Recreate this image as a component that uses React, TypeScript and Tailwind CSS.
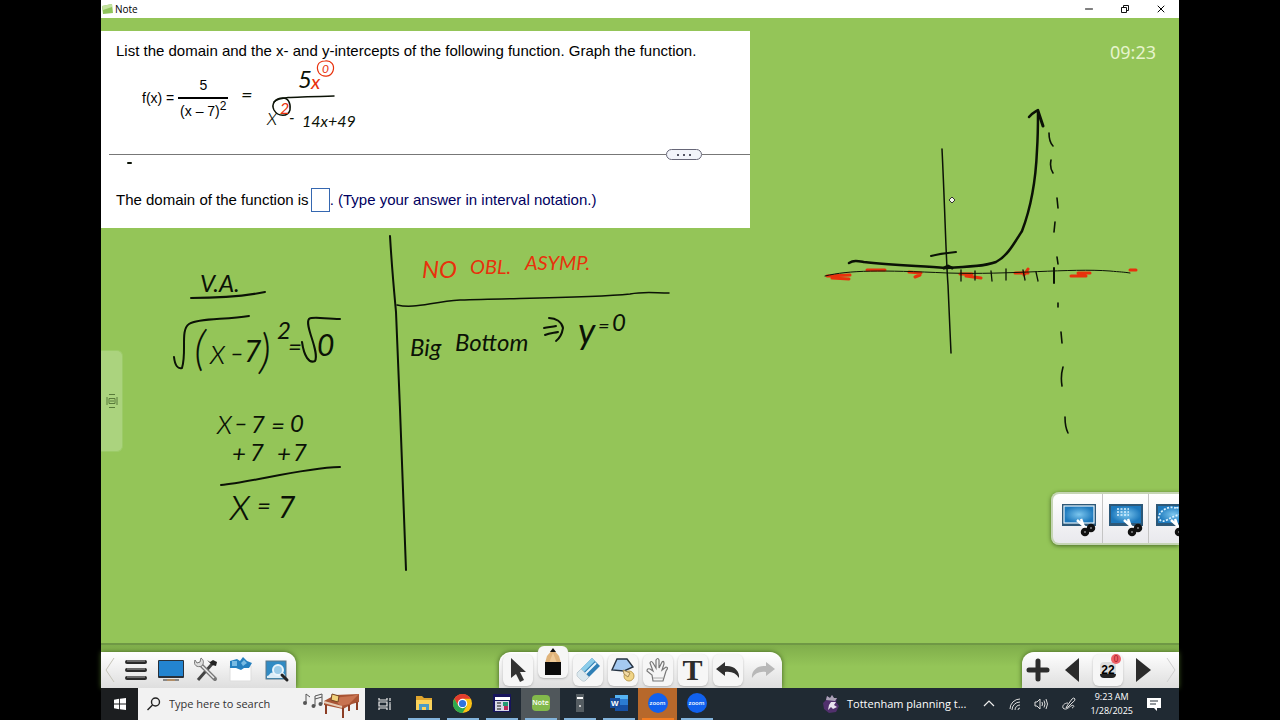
import React, { useState } from "react";
import { Minus, X } from "lucide-react";

const INK = "#0b1206";
const RED = "#e8310c";

// pen strokes on the board: path + width
const STROKES: { d: string; w: number; c?: string }[] = [
  // dividers
  { d: "M390 236C392 270 394 290 396 312C400 400 402 470 406 570", w: 2 },
  { d: "M397 305C415 309 430 302 460 300C520 298 590 298 630 294C645 291 655 293 669 293", w: 1.5 },
  { d: "M191 298C215 298 240 297 265 292", w: 2 },
  // radicals
  { d: "M174 357C175 366 178 369 182 368C187 352 180 330 189 324C198 318 225 320 249 316", w: 2 },
  { d: "M302 342C304 356 309 364 315 361C320 352 304 325 309 319C312 316 325 319 340 319", w: 2 },
  { d: "M221 485C250 483 300 468 340 467", w: 2 },
  // implies arrow
  { d: "M544 328C549 327 553 327 556 326M545 335C550 333 554 333 558 332M549 318C556 318 562 322 563 328C562 334 560 338 556 341", w: 2 },
  // fraction on the card
  { d: "M274 102C279 97 290 97 334 96", w: 1.5 },
  { d: "M283 98C275 98 271 104 274 110C278 117 288 117 290 110C291 103 288 98 283 98", w: 1.5 },
  { d: "M128 163H131", w: 2 },
  { d: "M325 61C317 61 316 68 319 73C323 78 331 77 333 71C335 65 331 60 325 61", w: 1.2, c: RED },
  // asymptote marks
  { d: "M827 276L850 275M832 278L849 279M867 270H885M909 272L921 273M915 277L920 275", w: 3, c: RED },
  { d: "M960 274L972 274M966 276L981 278M1015 273H1028M1024 275L1028 269M1071 276L1086 276M1078 273H1090M1130 270H1136", w: 3, c: RED },
  // axes
  { d: "M942 149C945 210 946 260 948 285C949 310 950 330 951 353", w: 1.5 },
  { d: "M825 276C850 270 880 270 948 273C1010 275 1070 268 1110 271C1120 272 1124 272 1130 273", w: 1 },
  { d: "M931 256C938 254 946 253 956 252", w: 2 },
  { d: "M961 270V281M975 271V280M991 271L992 281M1006 269V280M1023 270L1025 280M1036 272L1038 281", w: 1.3 },
  { d: "M1054 268V283", w: 2 },
  // curve
  { d: "M849 263C854 260 858 261 864 262C890 265 920 266 945 268C970 267 985 266 996 262C1006 257 1012 247 1022 231C1032 205 1036 175 1037 150C1038 135 1038 122 1038 112", w: 2.5 },
  { d: "M1029 117C1032 113 1035 112 1038 110", w: 2.5 },
  { d: "M1038 111L1043 126", w: 3 },
  { d: "M944 268L948 266L952 268", w: 3 },
  // vertical asymptote
  { d: "M1049 133C1049 139 1050 143 1053 146M1051 160C1050 165 1051 170 1053 173M1057 198L1058 208M1055 222L1054 232M1057 257L1058 264M1058 303V307M1061 332L1062 343M1063 367C1061 374 1061 380 1062 386M1065 417C1065 424 1066 429 1068 433", w: 1.6 },
];

// handwriting, one entry for each word
const NOTES: { t: string; x: number; y: number; s: string; c?: string }[] = [
  { t: "=", x: 241, y: 102, s: "text-xl" },
  { t: "5", x: 298, y: 88, s: "text-2xl" },
  { t: "x", x: 311, y: 89, s: "text-xl", c: RED },
  { t: "0", x: 322, y: 73, s: "text-xs", c: RED },
  { t: "x", x: 267, y: 125, s: "text-2xl font-light" },
  { t: "2", x: 280, y: 114, s: "text-base", c: RED },
  { t: "-", x: 289, y: 123, s: "text-base" },
  { t: "14x+49", x: 302, y: 127, s: "text-base" },
  { t: "V.A.", x: 200, y: 292, s: "text-2xl" },
  { t: "(", x: 194, y: 365, s: "text-5xl font-light" },
  { t: "x", x: 210, y: 364, s: "text-4xl font-light" },
  { t: "–", x: 230, y: 361, s: "text-2xl" },
  { t: "7", x: 244, y: 362, s: "text-3xl" },
  { t: ")", x: 259, y: 368, s: "text-5xl font-light" },
  { t: "2", x: 277, y: 339, s: "text-2xl" },
  { t: "=", x: 288, y: 355, s: "text-2xl" },
  { t: "0", x: 317, y: 356, s: "text-3xl" },
  { t: "x", x: 217, y: 434, s: "text-4xl font-light" },
  { t: "–", x: 234, y: 431, s: "text-2xl" },
  { t: "7", x: 251, y: 433, s: "text-2xl" },
  { t: "=", x: 271, y: 434, s: "text-2xl" },
  { t: "0", x: 290, y: 432, s: "text-2xl" },
  { t: "+", x: 232, y: 462, s: "text-2xl" },
  { t: "7", x: 250, y: 461, s: "text-2xl" },
  { t: "+", x: 277, y: 462, s: "text-2xl" },
  { t: "7", x: 293, y: 461, s: "text-2xl" },
  { t: "x", x: 230, y: 520, s: "text-5xl font-light" },
  { t: "=", x: 257, y: 514, s: "text-2xl" },
  { t: "7", x: 278, y: 518, s: "text-3xl" },
  { t: "NO", x: 422, y: 278, s: "text-2xl", c: RED },
  { t: "OBL.", x: 470, y: 274, s: "text-xl", c: RED },
  { t: "ASYMP.", x: 525, y: 270, s: "text-xl", c: RED },
  { t: "Big", x: 410, y: 356, s: "text-2xl" },
  { t: "Bottom", x: 455, y: 351, s: "text-2xl" },
  { t: "y", x: 578, y: 344, s: "text-4xl" },
  { t: "=", x: 598, y: 333, s: "text-xl" },
  { t: "0", x: 612, y: 331, s: "text-2xl" },
];

function InkLayer() {
  return (
    <svg
      className="pointer-events-none absolute inset-0 h-full w-full font-[Lato,sans-serif] italic"
      viewBox="101 18 1078 625"
      preserveAspectRatio="xMinYMin slice"
    >
      {STROKES.map((s, i) => (
        <path key={i} d={s.d} fill="none" stroke={s.c ?? INK} strokeWidth={s.w} strokeLinecap="round" strokeLinejoin="round" />
      ))}
      {NOTES.map((n, i) => (
        <text key={i} x={n.x} y={n.y} className={n.s} fill={n.c ?? INK}>
          {n.t}
        </text>
      ))}
      <path d="M952 197L955 200L952 203L949 200Z" fill="#f4f9ea" stroke="#333" />
    </svg>
  );
}

function TitleBar() {
  return (
    <header className="flex h-[18px] shrink-0 items-center bg-white font-['Open_Sans',sans-serif] text-black">
      <svg className="h-3 w-3" viewBox="0 0 12 12">
        <path d="M1 3L11 1L12 10L2 11Z" fill="#8fc45a" />
        <path d="M1 3L11 1L11 4L2 7Z" fill="#c4e2a0" />
      </svg>
      <span className="ml-0.5 flex-1 text-[10px]">Note</span>
      <button aria-label="Minimize" className="flex w-9 justify-center"><Minus className="h-3 w-3" strokeWidth={2} /></button>
      <button aria-label="Restore" className="flex w-9 justify-center">
        <svg className="h-3 w-3" viewBox="0 0 12 12" fill="none" stroke="#111">
          <path d="M2.5 4.500h5v5h-5zM4.500 4V2.500h5v5H8" />
        </svg>
      </button>
      <button aria-label="Close" className="flex w-9 justify-center"><X className="h-3 w-3" strokeWidth={2} /></button>
    </header>
  );
}

function ProblemCard() {
  const [answer, setAnswer] = useState("");
  return (
    <section className="mt-[13px] h-[197px] w-[649px] bg-white pl-[15px] font-['Liberation_Sans',Arial,sans-serif] text-[15px] leading-5 text-black">
      <p className="pt-[10px]">List the domain and the x- and y-intercepts of the following function. Graph the function.</p>
      <div className="mt-3 flex items-center pl-[26px] text-sm">
        <span>f(x) =</span>
        <span className="ml-1 flex flex-col items-center leading-6">
          <span className="w-[50px] border-b-2 border-black text-center">5</span>
          <span>(x – 7)<sup className="text-xs">2</sup></span>
        </span>
      </div>
      <div className="-ml-[7px] mt-[26px] flex items-center">
        <div className="h-px flex-1 bg-[#777]" />
        <button aria-label="More" className="flex h-[11px] w-9 items-center justify-center gap-1 rounded-full border border-[#667] bg-[#f2f4fa]">
          <i className="h-0.5 w-0.5 rounded-full bg-[#223]" />
          <i className="h-0.5 w-0.5 rounded-full bg-[#223]" />
          <i className="h-0.5 w-0.5 rounded-full bg-[#223]" />
        </button>
        <div className="h-px w-12 bg-[#777]" />
      </div>
      <div className="mt-7 flex items-center">
        <label htmlFor="domain">The domain of the function is</label>
        <input id="domain" value={answer} onChange={(e) => setAnswer(e.target.value)} className="ml-0.5 h-6 w-[19px] border border-[#3567b0] bg-white text-center outline-none" />
        <span className="text-[#000060]">. (Type your answer in interval notation.)</span>
      </div>
    </section>
  );
}

function CaptureIcon({ kind }: { kind: "screen" | "area" | "free" }) {
  return (
    <svg className="h-9 w-9" viewBox="0 0 36 36">
      <defs>
        <radialGradient id={`cap-${kind}`}>
          <stop offset="0" stopColor="#7cc6ee" />
          <stop offset="1" stopColor="#1d79bd" />
        </radialGradient>
      </defs>
      <rect x="1" y="3" width="34" height="22" fill="#2d5878" />
      <rect x="3" y="5" width="30" height="17" fill={`url(#cap-${kind})`} stroke={kind === "screen" ? "#e5f4fc" : "none"} strokeWidth="1.2" />
      {kind === "area" && <path d="M9 8H21M9 11H21M9 14H21" stroke="#d9f1ff" strokeWidth="1.5" strokeDasharray="2 1.500" />}
      {kind === "free" && <path d="M21 7C12 4 2 12 4 18C9 24 15 15 24 14C29 10 27 5 21 7" fill="none" stroke="#d9f1ff" strokeWidth="1.8" strokeDasharray="2 1.500" />}
      <path d="M16 19L25 27M20 18L24 29" stroke="#fff" strokeWidth="2.500" />
      <circle cx="24" cy="31" r="2.500" fill="none" stroke="#111" strokeWidth="3.500" />
      <circle cx="30" cy="27" r="2.500" fill="none" stroke="#111" strokeWidth="3.500" />
    </svg>
  );
}

function Board() {
  return (
    <main className="relative flex min-h-0 flex-1 items-start justify-between overflow-hidden">
      <ProblemCard />
      <time className="mr-[23px] mt-5 font-['Noto_Sans',sans-serif] text-lg leading-7 text-[#e6f4cc]">09:23</time>
      <InkLayer />
      <button aria-label="Open side panel" className="absolute left-0 top-[332px] flex h-[102px] w-[22px] items-center justify-center rounded-r-md border border-l-0 border-[#9ccb68] bg-[#abd37e]">
        <svg className="h-4 w-3" viewBox="0 0 12 16" fill="none" stroke="#587a3a">
          <path d="M3 1.500H9M3 14.500H9M3 5.500H9V10.500H3ZM4 8H8M1 4V12M11 4V12" />
        </svg>
      </button>
      <div className="absolute right-0 top-[474px] flex h-[53px] w-32 items-center overflow-hidden rounded-l-lg border-2 border-r-0 border-[#c5d5b5] bg-linear-to-b from-white to-[#e9e9ed] pl-0.5 shadow-[0_1px_4px_#4a6a28]">
        <button aria-label="Capture screen" className="flex h-full w-[47px] shrink-0 items-center justify-center"><CaptureIcon kind="screen" /></button>
        <button aria-label="Capture area" className="flex h-full w-[47px] shrink-0 items-center justify-center border-x border-[#c4c4c4]"><CaptureIcon kind="area" /></button>
        <button aria-label="Capture freehand" className="flex h-full w-[47px] shrink-0 items-center justify-center"><CaptureIcon kind="free" /></button>
      </div>
    </main>
  );
}

function Tool({ label, raised, plain, children }: { label: string; raised?: boolean; plain?: boolean; children: React.ReactNode }) {
  return (
    <button
      aria-label={label}
      className={`flex h-8 w-[30px] shrink-0 items-center justify-center rounded-md ${plain ? "" : "bg-[#f6f6f6] shadow-[0_1px_2px_#b5b5b5]"} ${raised ? "-mt-4" : ""}`}
    >
      <svg className="h-7 w-7" viewBox="0 0 28 28">{children}</svg>
    </button>
  );
}

function BoardToolbar() {
  const panel = "flex h-9 items-center gap-[5px] bg-linear-to-b from-white to-[#dedede] shadow-[0_0_5px_#3f5c20]";
  return (
    <nav className="grid h-[45px] shrink-0 grid-cols-[1fr_auto_1fr] items-end border-t-2 border-[#6f9845] bg-linear-to-b from-[#80ae4b] to-[#94c558] to-50%">
      <div className={`${panel} justify-self-start rounded-tr-xl pr-[5px]`}>
        <svg className="h-8 w-[15px]" viewBox="0 0 15 32" fill="none" stroke="#c5c4b8"><path d="M13 4L5 16L13 28" /></svg>
        <Tool label="Menu" plain>
          <path d="M5 6H23M5 14H23M5 22H23" stroke="#2a2a2a" strokeWidth="4" strokeLinecap="round" />
          <path d="M5 5H23M5 13H23M5 21H23" stroke="#aaa" />
        </Tool>
        <Tool label="Desktop" plain>
          <rect x="1" y="4" width="26" height="18" rx="1" fill="#293039" />
          <rect x="2" y="5" width="24" height="15" fill="#2384d0" />
          <path d="M6 24H22" stroke="#888" strokeWidth="2" />
          <path d="M10 24H18" stroke="#d99145" />
        </Tool>
        <Tool label="Tools" plain>
          <path d="M6 24L20 8" stroke="#444" strokeWidth="3" />
          <path d="M15 4L20 9L24 10L25 6L21 4L18 6Z" fill="#222" />
          <path d="M8 8L23 23" stroke="#777" strokeWidth="4" strokeLinecap="round" />
          <path d="M8 8L22 22" stroke="#eee" strokeWidth="1.500" />
          <path d="M9 2L8 6L5 7L3 4C1 9 5 12 10 10C12 7 12 4 9 2" fill="#ddd" stroke="#777" />
        </Tool>
        <Tool label="Gallery" plain>
          <path d="M3 10V25H24V10Z" fill="#fff" stroke="#ddd" />
          <path d="M3 5L10 3L13 5L16 1L20 5L25 7L22 12H17L14 14L9 12H3Z" fill="#2680bf" />
          <path d="M5 5H10V10H5ZM17 4L20 7L16 10L14 7Z" fill="#79bbe3" />
        </Tool>
        <Tool label="Image search" plain>
          <rect x="4" y="5" width="20" height="18" fill="#318bc4" stroke="#5b7889" />
          <path d="M5 20C8 20 8 15 12 17C14 13 20 14 23 19V22H5Z" fill="#dcedf7" />
          <circle cx="16" cy="14" r="5" fill="#9ccce9" stroke="#eaf5fc" strokeWidth="2" />
          <path d="M20 19L25 24" stroke="#222" strokeWidth="3" strokeLinecap="round" />
        </Tool>
      </div>
      <div className={`${panel} rounded-t-xl px-1`}>
        <Tool label="Select">
          <path d="M7 2V22L12 18L16 26L20 24L16 16H22Z" fill="#333" />
        </Tool>
        <Tool label="Pen" raised>
          <path d="M14 1L20 8L22 15H6L8 8Z" fill="#e0b37a" />
          <path d="M14 5L18 15H10Z" fill="#efca97" />
          <path d="M14 0L17 4L11 4Z" fill="#111" />
          <path d="M6 14H22V27H6Z" fill="#0b0b0b" />
        </Tool>
        <Tool label="Eraser">
          <path d="M3 17L18 2L26 10L11 25Z" fill="#2f7fb5" />
          <path d="M7 13L18 2L21 5L10 16Z" fill="#8ccdea" />
          <path d="M11 18L22 7" stroke="#e8f6fd" strokeWidth="2" />
          <path d="M3 17L7 13L15 21L11 25Q9 26 7 24L3 20Z" fill="#dbe8ee" stroke="#b9c5cb" strokeWidth=".7" />
        </Tool>
        <Tool label="Shapes">
          <path d="M8 3H18L24 11L15 15L3 14Z" fill="#a5caf1" stroke="#263342" strokeWidth="1.400" />
          <circle cx="20" cy="20" r="5" fill="#f0d486" stroke="#bf9e50" />
          <path d="M14 14L21 17L19 21L15 18Z" fill="#f4dca5" stroke="#a58b55" />
        </Tool>
        <Tool label="Pan">
          <path d="M9 25L8 19L3 15Q3 12 6 13L9 15L6 7Q7 4 9 7L12 12V4Q14 1 15 4V12L18 6Q20 4 20 8L18 14L22 11Q25 11 22 15L19 25Z" fill="#f5f5f5" stroke="#777" strokeWidth="1.200" />
          <path d="M9 22H19" stroke="#aaa" />
        </Tool>
        <button aria-label="Text" className="flex h-8 w-[30px] items-center justify-center rounded-md bg-[#f6f6f6] font-['Liberation_Serif',serif] text-3xl font-bold text-[#2c2c2c] shadow-[0_1px_2px_#b5b5b5]">T</button>
        <Tool label="Undo">
          <path d="M2 13L11 6V10C20 9 26 15 25 22C22 17 17 15 11 16V20Z" fill="#303030" />
        </Tool>
        <Tool label="Redo" plain>
          <path d="M26 13L17 6V10C8 9 2 15 3 22C6 17 11 15 17 16V20Z" fill="#b8b8b8" />
        </Tool>
      </div>
      <div className={`${panel} justify-self-end rounded-tl-xl pl-px`}>
        <Tool label="Add page" plain>
          <path d="M14 5V23M5 14H23" stroke="#2c2c2c" strokeWidth="5" strokeLinecap="round" />
        </Tool>
        <Tool label="Previous page" plain><path d="M6 14L20 2V26Z" fill="#2b2b2b" /></Tool>
        <button aria-label="Page 22" className="relative flex h-8 w-[30px] items-center justify-center rounded-md bg-[#f6f6f6] shadow-[0_1px_2px_#b5b5b5]">
          <span className="flex h-4 w-4 items-center justify-center rounded-sm border-b-4 border-[#222] bg-[#ddd] pt-1 font-['Liberation_Sans',sans-serif] text-xs font-bold text-black">22</span>
          <span className="absolute top-0 right-0.5 flex h-[10px] w-[10px] items-center justify-center rounded-full bg-[#ed6169] text-[8px] text-[#a31822]">0</span>
        </button>
        <Tool label="Next page" plain><path d="M7 2L22 14L7 26Z" fill="#2b2b2b" /></Tool>
        <svg className="h-8 w-4" viewBox="0 0 16 32" fill="none" stroke="#d0d0d0"><path d="M4 4L12 16L4 28" /></svg>
      </div>
    </nav>
  );
}

function TaskApp({ label, box = "", bar = "bg-[#83b4dc]", children }: { label: string; box?: string; bar?: string; children: React.ReactNode }) {
  return (
    <button aria-label={label} className={`flex h-full w-[39px] shrink-0 flex-col items-center ${box}`}>
      <span className="flex flex-1 items-center">{children}</span>
      <span className={`h-0.5 w-8 ${bar}`} />
    </button>
  );
}

function ZoomBadge() {
  return <span className="flex h-5 w-5 items-center justify-center rounded-full bg-[#1161ee] text-[6px] font-semibold text-white">zoom</span>;
}

function Taskbar() {
  return (
    <footer className="flex h-8 shrink-0 items-center bg-[#202a33] font-['Open_Sans',sans-serif] text-white">
      <button aria-label="Start" className="flex h-full w-[37px] items-center justify-center bg-[#1c1e20]">
        <svg className="h-3 w-3" viewBox="0 0 14 14" fill="#fff"><path d="M0 2L6 1V6.500H0ZM7 1L14 0V6.500H7ZM0 7.500H6V13L0 12ZM7 7.500H14V14L7 13Z" /></svg>
      </button>
      <div className="flex h-full w-[227px] items-center bg-[#f2f2f2] pl-2">
        <svg className="h-4 w-4 shrink-0" viewBox="0 0 16 16" fill="none" stroke="#222" strokeWidth="1.400"><circle cx="9.500" cy="6" r="4" /><path d="M6.500 9L1.500 14" /></svg>
        <input aria-label="Search" placeholder="Type here to search" className="ml-[7px] min-w-0 flex-1 bg-transparent text-[11px] text-black outline-none placeholder:text-[#333]" />
        <svg className="mr-1 h-7 w-[60px] shrink-0" viewBox="0 0 60 28">
          <path d="M5 13V4L9 7M14 16V6L21 4V14M14 9L21 7" fill="none" stroke="#555" />
          <g fill="#555"><circle cx="4" cy="13" r="2" /><circle cx="12.500" cy="16" r="2" /><circle cx="19.500" cy="14" r="2" /></g>
          <path d="M23 11L34 5L58 4V12L51 14L42 19L23 15Z" fill="#a95434" />
          <path d="M31 8L51 6L58 4L48 14L40 16Z" fill="#c87350" />
          <path d="M23 12L41 17" stroke="#e6ccb6" strokeWidth="2" />
          <path d="M25 15V24M42 18V28M56 12V20M48 15V21" stroke="#8c3d24" strokeWidth="2" />
          <path d="M31 4L38 6L37 12L30 10Z" fill="#f2d17b" stroke="#744322" />
        </svg>
      </div>
      <button aria-label="Task view" className="flex h-full w-[39px] items-center justify-center">
        <svg className="h-3.5 w-3.5" viewBox="0 0 14 14" fill="none" stroke="#eee" strokeWidth="1.200"><path d="M1 1V3H9V1M1 13V11H9V13M1 5H9V9H1ZM12 1V4M12 7V13M11 6H13" /></svg>
      </button>
      <TaskApp label="File Explorer">
        <svg className="h-4 w-[18px]" viewBox="0 0 18 16"><path d="M1 1H7L9 3H17V15H1Z" fill="#e0a52e" /><path d="M1 5H17V15H1Z" fill="#fbd35c" /><path d="M4 15V9H14V15H11V12H7V15Z" fill="#4b9bc4" /></svg>
      </TaskApp>
      <TaskApp label="Chrome">
        <svg className="h-[19px] w-[19px]" viewBox="0 0 20 20">
          <circle cx="10" cy="10" r="10" fill="#fbc116" />
          <path d="M1.340 5A10 10 0 0 1 18.660 5H10L5.670 12.500Z" fill="#e33b2e" />
          <path d="M1.340 5A10 10 0 0 0 10 20L14.330 12.500H5.670Z" fill="#2da94f" />
          <circle cx="10" cy="10" r="5" fill="#fff" /><circle cx="10" cy="10" r="3.800" fill="#2f73e0" />
        </svg>
      </TaskApp>
      <TaskApp label="Scheduler">
        <svg className="h-[18px] w-[18px]" viewBox="0 0 18 18"><path d="M0 0H18V18H0Z" fill="#17155c" /><path d="M2 3H17V6H2Z" fill="#fff" /><path d="M2 7H16V17H2Z" fill="#d8d8e8" /><path d="M4 9H8M4 12H8M4 15H8" stroke="#555" strokeWidth="1.500" /><path d="M10 8H15V12H10Z" fill="#259a72" /><path d="M11 12H15V16H11Z" fill="#bd2b5a" /></svg>
      </TaskApp>
      <TaskApp label="Note" box="bg-[#50575b]">
        <span className="flex h-4 w-[18px] items-center justify-center rounded-sm bg-[#83b94b] text-[7px] font-semibold text-white">Note</span>
      </TaskApp>
      <TaskApp label="Device">
        <svg className="h-[18px] w-2" viewBox="0 0 8 18"><path d="M0 0H8V18H0Z" fill="#555d62" /><path d="M1 3H7V5H1Z" fill="#fff" /><path d="M3 11H5V13H3Z" fill="#ccc" /></svg>
      </TaskApp>
      <TaskApp label="Word">
        <svg className="h-4 w-[18px]" viewBox="0 0 18 16">
          <path d="M5 0H18V16H5Z" fill="#2b7cd3" /><path d="M5 0H18V4H5Z" fill="#55b3f2" /><path d="M5 10H18V16H5Z" fill="#1650a4" /><path d="M0 3H10V13H0Z" fill="#174b99" />
          <text x="1" y="11" fill="#fff" className="font-['Liberation_Sans',sans-serif] text-[8px] font-bold">W</text>
        </svg>
      </TaskApp>
      <TaskApp label="Zoom meeting" box="bg-[#b7682b]" bar="bg-[#f47c20]"><ZoomBadge /></TaskApp>
      <TaskApp label="Zoom"><ZoomBadge /></TaskApp>

      <div className="ml-auto flex h-full items-center">
        <a href="#news" className="flex items-center gap-2 text-[11px]">
          <svg className="h-[18px] w-4" viewBox="0 0 16 18"><path d="M3 5L4 1L7 3L9 0L11 3L14 3L13 7L16 11L13 17L6 18L1 14L0 8Z" fill="#51306d" /><path d="M3 5L4 1L7 3L9 0L11 3L14 3L12 6Z" fill="#aaa2b6" /><path d="M8 7L13 7L11 10L14 12L10 14L8 12L5 15L6 10Z" fill="#e9e3ef" /></svg>
          <span>Tottenham planning t...</span>
        </a>
        <svg className="ml-4 h-3 w-3.5" viewBox="0 0 14 12" fill="none" stroke="#eee" strokeWidth="1.200"><path d="M2 8L7 3L12 8" /></svg>
        <svg className="ml-3 h-3.5 w-3.5" viewBox="0 0 14 14" fill="none" stroke="#ddd"><path d="M2 12A10 10 0 0 1 12 2M4 13A8 8 0 0 1 12 5M7 13A5 5 0 0 1 12 8M10 13A2 2 0 0 1 12 11" /></svg>
        <svg className="ml-3 h-3.5 w-3.5" viewBox="0 0 14 14" fill="none" stroke="#ddd"><path d="M1 5H3L6 2V12L3 9H1ZM8 5Q9 7 8 9M10 3.500Q12 7 10 10.500M12 2Q15 7 12 12" /></svg>
        <svg className="ml-3.5 h-3.5 w-3.5" viewBox="0 0 14 14" fill="none" stroke="#ddd"><path d="M5 9L10 2Q12 0 13 2Q13 4 11 5L6 10L4 11ZM6 6C2 6 0 9 1 11C4 14 7 10 9 9C12 7 13 10 10 11" /></svg>
        <div className="ml-3.5 text-center text-[9px] leading-[14px]">
          <div>9:23 AM</div>
          <div>1/28/2025</div>
        </div>
        <button aria-label="Notifications" className="ml-3.5 mr-[18px]">
          <svg className="h-3.5 w-3.5" viewBox="0 0 14 14"><path d="M0 1H14V11H10V14L7 11H0Z" fill="#fff" /><path d="M3 4H11M3 7H9" stroke="#26303a" strokeWidth="1.200" /></svg>
        </button>
      </div>
    </footer>
  );
}

export default function App() {
  return (
    <div className="flex h-screen bg-black px-[101px]">
      <div className="flex min-w-0 flex-1 flex-col bg-[#94c558]">
        <TitleBar />
        <Board />
        <BoardToolbar />
        <Taskbar />
      </div>
    </div>
  );
}
